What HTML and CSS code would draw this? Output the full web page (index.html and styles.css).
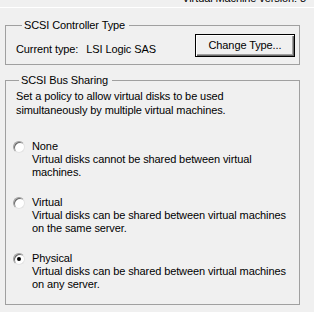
FILE: index.html
```html
<!DOCTYPE html>
<html lang="en">
<head>
    <meta charset="UTF-8">
    <title>SCSI Controller</title>
    <link rel="stylesheet" href="styles.css">
</head>
<body>
    <div class="version">Virtual Machine version: 8</div>
    <div class="rule"></div>

    <!-- Controller type -->
    <fieldset class="group group-type">
        <legend>SCSI Controller Type</legend>
        <div class="type-row">
            <span class="type-label">Current type:</span>
            <span class="type-value">LSI Logic SAS</span>
            <button type="button" class="btn btn-default">Change Type...</button>
        </div>
    </fieldset>

    <!-- Bus sharing -->
    <fieldset class="group group-sharing">
        <legend>SCSI Bus Sharing</legend>
        <p class="intro">Set a policy to allow virtual disks to be used<br>simultaneously by multiple virtual machines.</p>

        <label class="option">
            <input type="radio" name="sharing" value="none">
            <span class="radio"></span>
            <span class="option-text">
                <span class="option-title">None</span>
                <span class="option-desc">Virtual disks cannot be shared between virtual<br>machines.</span>
            </span>
        </label>

        <label class="option">
            <input type="radio" name="sharing" value="virtual">
            <span class="radio"></span>
            <span class="option-text">
                <span class="option-title">Virtual</span>
                <span class="option-desc">Virtual disks can be shared between virtual machines<br>on the same server.</span>
            </span>
        </label>

        <label class="option">
            <input type="radio" name="sharing" value="physical" checked>
            <span class="radio"></span>
            <span class="option-text">
                <span class="option-title">Physical</span>
                <span class="option-desc">Virtual disks can be shared between virtual machines<br>on any server.</span>
            </span>
        </label>
    </fieldset>
</body>
</html>
```

FILE: styles.css
```css
body {
    margin: 0;
    background: #f0f0f0;
    color: #000;
    font-family: "Liberation Sans", Arial, sans-serif;
    font-size: 11px;
    line-height: 13px;
    letter-spacing: -0.1px;
    overflow: hidden;
}
.version {
    height: 13px;
    margin-top: -8px;
    padding-right: 8px;
    text-align: right;
}
.rule {
    height: 1px;
    margin-top: 2px;
    background: #fff;
}
.group {
    margin: 0 14px 0 5px;
    border: 1px solid #a0a0a0;
    padding: 0;
    min-width: 0;
}
.group legend {
    margin-left: 6px;
    padding: 0 4px 0 2px;
    line-height: 13px;
}
.group-type {
    margin-top: 11px;
    padding: 2px 4px 7px 10px;
}
.type-row {
    display: flex;
    align-items: flex-end;
}
.type-label,
.type-value {
    margin-bottom: 1px;
}
.type-value {
    margin-left: 8px;
}
.btn {
    margin-left: auto;
    width: 100px;
    height: 23px;
    padding: 0;
    font: inherit;
    letter-spacing: inherit;
    color: #000;
    background: #f0f0f0;
    border: 1px solid #000;
    box-shadow: inset 1px 1px 0 #fff, inset -1px -1px 0 #696969, inset -2px -2px 0 #a0a0a0;
}
.group-sharing {
    margin-top: 9px;
    padding: 2px 4px 13px 7px;
}
.intro {
    margin: 0 0 23px 3px;
    line-height: 14px;
}
.option {
    display: flex;
    align-items: flex-start;
    margin-bottom: 17px;
}
.option:last-child {
    margin-bottom: 0;
}
.option input {
    display: none;
}
.radio {
    flex: none;
    width: 10px;
    height: 10px;
    margin: 1px 7px 0 0;
    border-radius: 50%;
    background: #fff;
    border: 1px solid;
    border-color: #a0a0a0 #e3e3e3 #e3e3e3 #a0a0a0;
    box-shadow: inset 1px 1px 0 #696969;
    display: flex;
    align-items: center;
    justify-content: center;
}
.option input:checked + .radio::after {
    content: "";
    width: 4px;
    height: 4px;
    border-radius: 50%;
    background: #000;
}
.option-text {
    display: flex;
    flex-direction: column;
}
```
